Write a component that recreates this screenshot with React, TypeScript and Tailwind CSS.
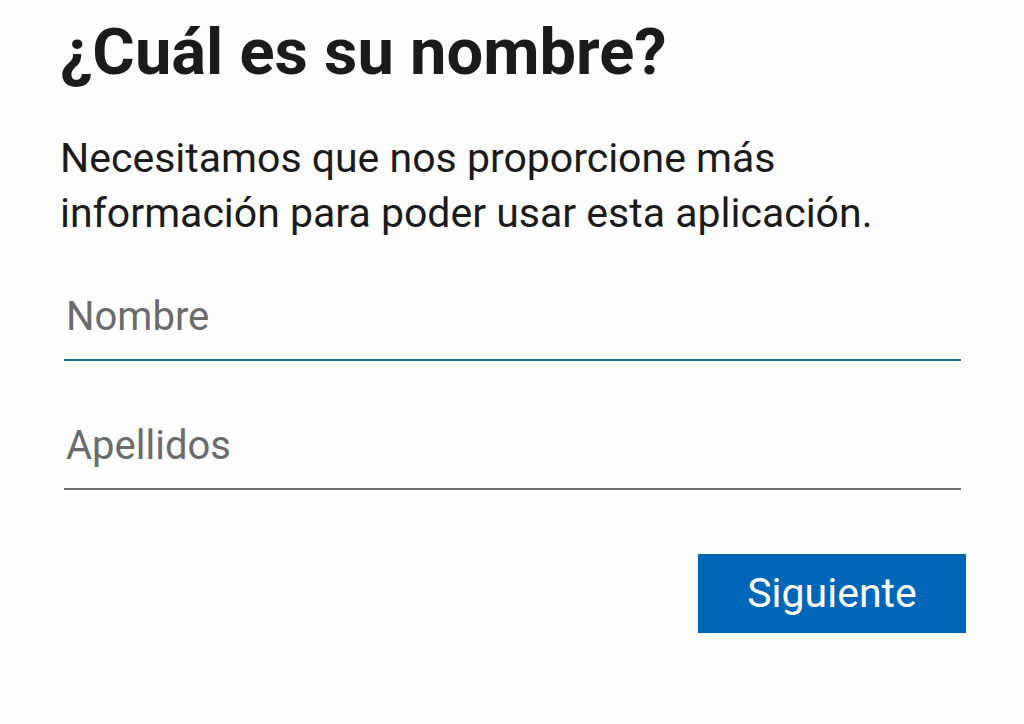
export default function App() {
  return (
    <div className="w-[1024px] h-[724px] bg-[#fdfdfd] overflow-hidden" style={{ fontFamily: 'Roboto, "Noto Sans", sans-serif' }}>
      <div className="pl-[60px] pr-[58px] pt-[12px] flex flex-col">
        <h1 className="text-[65px] leading-[80px] font-bold text-[#1b1b1b]">¿Cuál es su nombre?</h1>
        <p className="mt-[39px] text-[41px] leading-[55px] text-[#1b1b1b]">
          Necesitamos que nos proporcione más
          <br />
          información para poder usar esta aplicación.
        </p>
        <div className="mt-[40px] ml-[4px] mr-[5px] flex flex-col">
          <div className="h-[80px] flex items-end pb-[20px] border-b-2 border-[#23708f]">
            <span className="text-[40px] leading-[44px] text-[#6b6b6b] pl-[2px]">Nombre</span>
          </div>
          <div className="h-[129px] flex items-end pb-[20px] border-b-2 border-[#6e6e6e]">
            <span className="text-[40px] leading-[44px] text-[#6b6b6b] pl-[2px]">Apellidos</span>
          </div>
        </div>
        <div className="mt-[64px] flex justify-end">
          <button className="w-[268px] h-[79px] bg-[#0067b8] text-white text-[41px]">Siguiente</button>
        </div>
      </div>
    </div>
  );
}
